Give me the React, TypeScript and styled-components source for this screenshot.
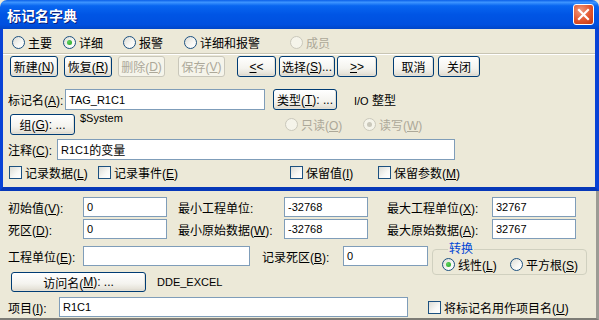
import styled, { createGlobalStyle } from 'styled-components';

const GlobalStyle = createGlobalStyle`
  html, body {
    margin: 0;
    padding: 0;
    background: #ece9d8;
  }
  body {
    font-family: "Liberation Sans", "Noto Sans CJK SC", sans-serif;
    font-size: 12px;
    color: #000;
  }
  * { box-sizing: border-box; }
`;

const Screen = styled.div`
  width: 599px;
  height: 320px;
  overflow: hidden;
  display: flex;
  flex-direction: column;
  background: #ece9d8;
`;

const Dialog = styled.div`
  height: 191px;
  flex: none;
  display: flex;
  flex-direction: column;
`;

const TitleBar = styled.div`
  height: 29px;
  flex: none;
  display: flex;
  align-items: center;
  justify-content: space-between;
  padding: 0 5px 0 7px;
  border-radius: 7px 7px 0 0;
  background: linear-gradient(
    #0a5fe8 0%,
    #3d95ff 8%,
    #0866f0 20%,
    #0055e5 50%,
    #0050df 85%,
    #0046c8 100%
  );
`;

const Title = styled.span`
  color: #fff;
  font-size: 14px;
  font-weight: bold;
  text-shadow: 1px 1px 0 #0a1e7a;
`;

const CloseBtn = styled.div`
  width: 21px;
  height: 21px;
  border: 1px solid #fff;
  border-radius: 3px;
  background: radial-gradient(circle at 35% 30%, #f09a7e 0%, #e2552d 55%, #c2350e 100%);
  display: flex;
  align-items: center;
  justify-content: center;
`;

const DialogBody = styled.div`
  flex: 1;
  display: flex;
  flex-direction: column;
  border-left: 3px solid #0842d6;
  border-right: 4px solid #0842d6;
  border-bottom: 4px solid #0738b8;
  background: #ece9d8;
`;

const Row = styled.div<{ $top: number; $left?: number; $h?: number }>`
  display: flex;
  align-items: center;
  height: ${p => p.$h ?? 21}px;
  margin-top: ${p => p.$top}px;
  padding-left: ${p => p.$left ?? 5}px;
  flex: none;
  white-space: nowrap;
`;

const Separator = styled.div`
  height: 2px;
  flex: none;
  border-top: 1px solid #c8c5b4;
  border-bottom: 1px solid #fff;
`;

const Label = styled.span<{ $w: number; $ml?: number }>`
  width: ${p => p.$w}px;
  margin-left: ${p => p.$ml ?? 0}px;
  flex: none;
`;

const Text = styled.span<{ $ml?: number; $w?: number; $up?: number }>`
  margin-left: ${p => p.$ml ?? 0}px;
  width: ${p => (p.$w ? `${p.$w}px` : 'auto')};
  flex: none;
  align-self: ${p => (p.$up ? 'flex-start' : 'center')};
  margin-top: ${p => (p.$up ? -p.$up : 0)}px;
`;

// latin runs are set a bit smaller, the way Tahoma 8pt sits next to 12px CJK
const Latin = styled.span`
  font-size: 11px;
`;

const Field = styled.div<{ $w: number; $h?: number }>`
  width: ${p => p.$w}px;
  height: ${p => p.$h ?? 21}px;
  flex: none;
  border: 1px solid #7f9db9;
  background: #fff;
  padding-left: 3px;
  display: flex;
  align-items: center;
`;

const Button = styled.div<{ $w: number; $ml?: number; $h?: number; $off?: boolean }>`
  width: ${p => p.$w}px;
  height: ${p => p.$h ?? 21}px;
  margin-left: ${p => p.$ml ?? 0}px;
  flex: none;
  display: flex;
  align-items: center;
  justify-content: center;
  border: 1px solid ${p => (p.$off ? '#c9c7ba' : '#003c74')};
  border-radius: 3px;
  color: ${p => (p.$off ? '#aca899' : '#000')};
  background: ${p =>
    p.$off ? '#f5f4ea' : 'linear-gradient(#ffffff 0%, #f4f3ee 60%, #e6e3d9 88%, #d6d0c5 100%)'};
  box-shadow: ${p => (p.$off ? 'none' : 'inset -1px -1px 0 #e3e0d6')};
`;

const Option = styled.div<{ $w?: number; $ml?: number; $off?: boolean }>`
  display: flex;
  align-items: center;
  gap: 3px;
  width: ${p => (p.$w ? `${p.$w}px` : 'auto')};
  margin-left: ${p => p.$ml ?? 0}px;
  flex: none;
  color: ${p => (p.$off ? '#aca899' : '#000')};
`;

const RadioDot = styled.span<{ $on?: boolean; $off?: boolean }>`
  width: 13px;
  height: 13px;
  flex: none;
  border-radius: 50%;
  border: 1px solid ${p => (p.$off ? '#cac8bb' : '#1c5180')};
  background: ${p => (p.$off ? '#f5f4ea' : 'linear-gradient(135deg, #dcdcd5 0%, #f8f8f5 60%, #ffffff 100%)')};
  display: flex;
  align-items: center;
  justify-content: center;
  &::after {
    content: '';
    display: ${p => (p.$on ? 'block' : 'none')};
    width: 5px;
    height: 5px;
    border-radius: 50%;
    background: ${p => (p.$off ? '#cac8bb' : 'radial-gradient(circle at 35% 35%, #5ed25e, #21a121)')};
  }
`;

const CheckBox = styled.span`
  width: 13px;
  height: 13px;
  flex: none;
  border: 1px solid #1c5180;
  background: linear-gradient(135deg, #dcdcd5 0%, #f8f8f5 60%, #ffffff 100%);
`;

const Lower = styled.div`
  flex: 1;
  display: flex;
  flex-direction: column;
  border-right: 3px solid #9c9b94;
  border-bottom: 2px solid #7d7c76;
`;

const Split = styled.div`
  display: flex;
  margin-top: 7px;
  flex: none;
`;

const Column = styled.div`
  display: flex;
  flex-direction: column;
`;

const Group = styled.fieldset`
  width: 155px;
  height: 33px;
  margin: -4px 0 0 4px;
  padding: 0 0 0 9px;
  border: 1px solid #d0d0bf;
  border-radius: 4px;
  display: flex;
  align-items: center;
  legend {
    color: #0046d5;
    padding: 0 1px;
    margin-left: 6px;
    font-size: 12px;
    line-height: 14px;
  }
`;

const GroupInner = styled.div`
  display: flex;
  align-items: center;
  margin-top: -2px;
`;

type OptProps = { label: React.ReactNode; on?: boolean; off?: boolean; w?: number; ml?: number };

const Radio = ({ label, on, off, w, ml }: OptProps) => (
  <Option $w={w} $ml={ml} $off={off}>
    <RadioDot $on={on} $off={off} />
    <span>{label}</span>
  </Option>
);

const Check = ({ label, w, ml }: OptProps) => (
  <Option $w={w} $ml={ml}>
    <CheckBox />
    <span>{label}</span>
  </Option>
);

const App = () => {
  return (
    <>
      <GlobalStyle />
      <Screen>
        <Dialog>
          <TitleBar>
            <Title>标记名字典</Title>
            <CloseBtn>
              <svg width="13" height="13" viewBox="0 0 13 13">
                <path d="M2 2 L11 11 M11 2 L2 11" stroke="#fff" strokeWidth="2.2" strokeLinecap="square" />
              </svg>
            </CloseBtn>
          </TitleBar>
          <DialogBody>
            <Row $top={2} $left={9} $h={22}>
              <Radio label="主要" w={51} />
              <Radio label="详细" on w={60} />
              <Radio label="报警" w={61} />
              <Radio label="详细和报警" w={106} />
              <Radio label="成员" off />
            </Row>
            <Separator />
            <Row $top={1} $left={7}>
              <Button $w={48}>新建(<u>N</u>)</Button>
              <Button $w={48} $ml={6}>恢复(<u>R</u>)</Button>
              <Button $w={47} $ml={6} $off>删除(<u>D</u>)</Button>
              <Button $w={47} $ml={13} $off>保存(<u>V</u>)</Button>
              <Button $w={39} $ml={12}><u>&lt;</u>&lt;</Button>
              <Button $w={56} $ml={3}>选择(<u>S</u>)...</Button>
              <Button $w={40} $ml={2}><u>&gt;</u>&gt;</Button>
              <Button $w={41} $ml={16}>取消</Button>
              <Button $w={42} $ml={4}>关闭</Button>
            </Row>
            <Row $top={12}>
              <Label $w={57}>标记名(<u>A</u>):</Label>
              <Field $w={200}><Latin>TAG_R1C1</Latin></Field>
              <Button $w={64} $ml={8}>类型(<u>T</u>): ...</Button>
              <Text $ml={17}><Latin>I/O</Latin> 整型</Text>
            </Row>
            <Row $top={4} $left={7}>
              <Button $w={65}>组(<u>G</u>): ...</Button>
              <Text $ml={5} $w={205} $up={3}><Latin>$System</Latin></Text>
              <Radio label={<>只读(<u>O</u>)</>} off w={78} />
              <Radio label={<>读写(<u>W</u>)</>} on off />
            </Row>
            <Row $top={4}>
              <Label $w={49}>注释(<u>C</u>):</Label>
              <Field $w={398}><Latin>R1C1</Latin>的变量</Field>
            </Row>
            <Row $top={4} $left={6} $h={16}>
              <Check label={<>记录数据(<u>L</u>)</>} w={89} />
              <Check label={<>记录事件(<u>E</u>)</>} w={192} />
              <Check label={<>保留值(<u>I</u>)</>} w={88} />
              <Check label={<>保留参数(<u>M</u>)</>} />
            </Row>
          </DialogBody>
        </Dialog>
        <Lower>
          <Row $top={6} $left={8} $h={20}>
            <Label $w={75}>初始值(<u>V</u>):</Label>
            <Field $w={84} $h={20}><Latin>0</Latin></Field>
            <Label $w={106} $ml={11}>最小工程单位:</Label>
            <Field $w={84} $h={20}><Latin>-32768</Latin></Field>
            <Label $w={105} $ml={19}>最大工程单位(<u>X</u>):</Label>
            <Field $w={84} $h={20}><Latin>32767</Latin></Field>
          </Row>
          <Row $top={2} $left={8} $h={20}>
            <Label $w={75}>死区(<u>D</u>):</Label>
            <Field $w={84} $h={20}><Latin>0</Latin></Field>
            <Label $w={106} $ml={11}>最小原始数据(<u>W</u>):</Label>
            <Field $w={84} $h={20}><Latin>-32768</Latin></Field>
            <Label $w={105} $ml={19}>最大原始数据(<u>A</u>):</Label>
            <Field $w={84} $h={20}><Latin>32767</Latin></Field>
          </Row>
          <Split>
            <Column>
              <Row $top={0} $left={8} $h={20}>
                <Label $w={75}>工程单位(<u>E</u>):</Label>
                <Field $w={167} $h={20} />
                <Label $w={81} $ml={12}>记录死区(<u>B</u>):</Label>
                <Field $w={85} $h={20}><Latin>0</Latin></Field>
              </Row>
              <Row $top={6} $left={11} $h={20}>
                <Button $w={135} $h={20}>访问名(<u>M</u>): ...</Button>
                <Text $ml={11}><Latin>DDE_EXCEL</Latin></Text>
              </Row>
            </Column>
            <Group>
              <legend>转换</legend>
              <GroupInner>
                <Radio label={<>线性(<u>L</u>)</>} on w={68} />
                <Radio label={<>平方根(<u>S</u>)</>} />
              </GroupInner>
            </Group>
          </Split>
          <Row $top={5} $left={8} $h={20}>
            <Label $w={51}>项目(<u>I</u>):</Label>
            <Field $w={349} $h={20}><Latin>R1C1</Latin></Field>
            <Check label={<>将标记名用作项目名(<u>U</u>)</>} ml={20} />
          </Row>
        </Lower>
      </Screen>
    </>
  );
};

export default App;
